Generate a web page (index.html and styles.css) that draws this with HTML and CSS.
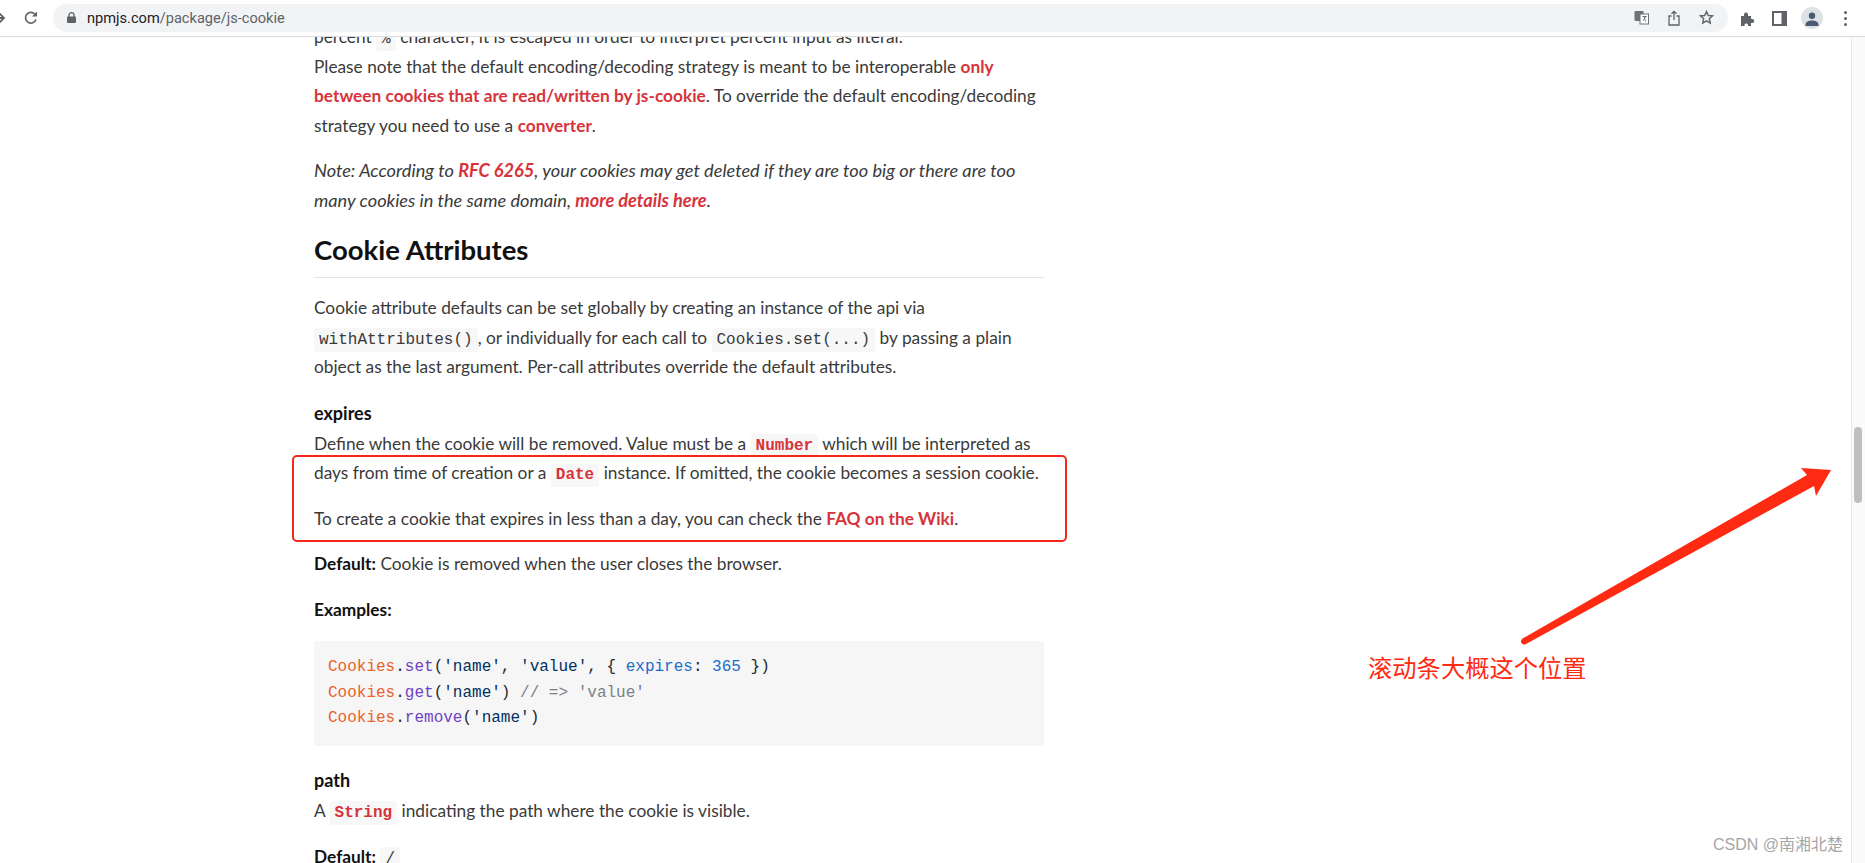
FILE: index.html
```html
<!DOCTYPE html>
<html lang="en">
<head>
    <meta charset="UTF-8">
    <title>js-cookie - npm</title>
    <link rel="stylesheet" href="styles.css">
</head>
<body>
    <header class="toolbar">
        <svg class="nav-icon forward" width="16" height="16" viewBox="0 0 16 16"><path d="M1 8h12M8 3l5 5-5 5" fill="none" stroke="#5f6368" stroke-width="1.8"/></svg>
        <svg class="nav-icon reload" width="16" height="16" viewBox="0 0 16 16"><path d="M13 9.5A5.4 5.4 0 1 1 11.8 4" fill="none" stroke="#5f6368" stroke-width="1.7"/><path d="M14 1.5v5h-5z" fill="#5f6368"/></svg>
        <div class="omnibox">
            <svg width="9" height="11" viewBox="0 0 9 11"><path d="M2 5V3.2a2.5 2.5 0 0 1 5 0V5" fill="none" stroke="#5f6368" stroke-width="1.3"/><rect y="4.5" width="9" height="6.5" rx="1" fill="#5f6368"/></svg>
            <span class="url">npmjs.com<span class="url-path">/package/js-cookie</span></span>
            <div class="omni-actions">
                <svg width="15" height="15" viewBox="0 0 15 15"><rect x="0.5" y="1" width="9" height="10" rx="1" fill="#6f7276"/><rect x="6" y="4" width="8.5" height="10" fill="#fff" stroke="#6f7276"/><path d="M8.5 6.5h4M10 6.5l1.5 5M12 6.5l-3 4" fill="none" stroke="#6f7276"/></svg>
                <svg width="12" height="16" viewBox="0 0 12 16"><path d="M3.5 6H1v9h10V6H8.500M6 10V1.500M3.500 3.800L6 1.300l2.500 2.500" fill="none" stroke="#5f6368" stroke-width="1.300"/></svg>
                <svg width="15" height="15" viewBox="0 0 15 15"><path d="M7.500 1.500l1.800 4 4.300.4-3.300 2.900 1 4.300-3.800-2.300-3.800 2.300 1-4.300L1.400 5.900l4.300-.4z" fill="none" stroke="#5f6368" stroke-width="1.400"/></svg>
            </div>
        </div>
        <svg class="puzzle" width="15" height="15" viewBox="0 0 15 15"><path d="M1 5h3V3.500a2 2 0 0 1 4 0V5h3v3h1.200a2 2 0 0 1 0 4H11v3H8v-1.200a1.800 1.800 0 0 0-3.500 0V15H1z" fill="#5f6368"/></svg>
        <svg class="sidebar" width="15" height="15" viewBox="0 0 15 15"><rect x="1" y="1" width="13" height="13" fill="#fff" stroke="#5f6368" stroke-width="2"/><rect x="9.500" y="1" width="4.500" height="13" fill="#5f6368"/></svg>
        <div class="avatar"><svg width="14" height="14" viewBox="0 0 14 14"><circle cx="7" cy="3.800" r="3.200" fill="#4a5a72"/><path d="M0.500 14v-1.500C0.500 10 4 8.600 7 8.600s6.500 1.400 6.500 3.900V14z" fill="#4a5a72"/></svg></div>
        <div class="menu-dots"><i></i><i></i><i></i></div>
    </header>

    <div class="page">
        <main class="viewport">
            <article class="readme">
                <p>percent <code>%</code> character, it is escaped in order to interpret percent input as literal.<br>
                Please note that the default encoding/decoding strategy is meant to be interoperable <a href="#">only between cookies that are read/written by js-cookie</a>. To override the default encoding/decoding strategy you need to use a <a href="#">converter</a>.</p>
                <p><em>Note: According to <a href="#">RFC 6265</a>, your cookies may get deleted if they are too big or there are too many cookies in the same domain, <a href="#">more details here</a>.</em></p>
                <h2>Cookie Attributes</h2>
                <p>Cookie attribute defaults can be set globally by creating an instance of the api via <code>withAttributes()</code>, or individually for each call to <code>Cookies.set(...)</code> by passing a plain object as the last argument. Per-call attributes override the default attributes.</p>
                <h3>expires</h3>
                <p>Define when the cookie will be removed. Value must be a <code class="type">Number</code> which will be interpreted as days from time of creation or a <code class="type">Date</code> instance. If omitted, the cookie becomes a session cookie.</p>
                <p>To create a cookie that expires in less than a day, you can check the <a href="#">FAQ on the Wiki</a>.</p>
                <p><strong>Default:</strong> Cookie is removed when the user closes the browser.</p>
                <p><strong>Examples:</strong></p>
                <pre class="snippet"><span class="obj">Cookies</span>.<span class="fn">set</span>(<span class="str">'name'</span>, <span class="str">'value'</span>, { <span class="num">expires</span>: <span class="num">365</span> })
<span class="obj">Cookies</span>.<span class="fn">get</span>(<span class="str">'name'</span>) <span class="cmt">// =&gt; 'value'</span>
<span class="obj">Cookies</span>.<span class="fn">remove</span>(<span class="str">'name'</span>)</pre>
                <h3>path</h3>
                <p>A <code class="type">String</code> indicating the path where the cookie is visible.</p>
                <p><strong>Default:</strong> <code>/</code></p>
            </article>
        </main>
        <aside class="scrollbar"><div class="scroll-thumb"></div></aside>
    </div>

    <div class="mark-box"></div>
    <svg class="mark-arrow" width="325" height="190" viewBox="0 0 325 190"><path d="M292 15L286 8 316 10 301 36 299 26 11 184Q8.500 185.500 6.500 183 5 181 7.500 178.500z" fill="#ff2a12"/></svg>
    <div class="mark-note">滚动条大概这个位置</div>
    <div class="watermark">CSDN @南湘北楚</div>
</body>
</html>
```

FILE: styles.css
```css
*{
    box-sizing: border-box;
}
html,
body{
    margin: 0;
    height: 863px;
    overflow: hidden;
    background-color: #ffffff;
}
body{
    font-family: "Lato", "Noto Sans CJK SC", sans-serif;
    color: #3a3a3a;
}

/* browser bar */
.toolbar{
    position: relative;
    z-index: 2;
    height: 37px;
    display: flex;
    align-items: center;
    background-color: #ffffff;
    border-bottom: 1px solid #dcdcdc;
}
.nav-icon{
    flex: none;
}
.forward{
    margin-left: -9px;
}
.reload{
    margin-left: 16px;
}
.omnibox{
    width: 1675px;
    height: 28px;
    margin-left: 14px;
    margin-top: -1px;
    padding: 0 14px;
    display: flex;
    align-items: center;
    background-color: #f1f3f4;
    border-radius: 14px;
}
.url{
    margin-left: 11px;
    font-family: "Roboto", sans-serif;
    font-size: 14.6px;
    color: #202124;
}
.url-path{
    color: #5f6368;
}
.omni-actions{
    margin-left: auto;
    display: flex;
    align-items: center;
    gap: 19px;
}
.puzzle{
    margin-left: 12px;
}
.sidebar{
    margin-left: 17px;
}
.avatar{
    width: 22px;
    height: 22px;
    margin-left: 14px;
    display: flex;
    align-items: flex-end;
    justify-content: center;
    padding-bottom: 3px;
    background-color: #dee1e6;
    border-radius: 50%;
}
.menu-dots{
    margin-left: 21px;
    display: grid;
    gap: 3px;
}
.menu-dots i{
    display: block;
    width: 3px;
    height: 3px;
    background-color: #5f6368;
    border-radius: 50%;
}

/* page */
.page{
    display: flex;
    height: 826px;
}
.viewport{
    flex: 1;
    overflow: hidden;
}
.readme{
    width: 730px;
    margin-left: 314px;
    margin-top: -15px;
    font-size: 17.3px;
    line-height: 29.5px;
}
.readme p{
    margin: 0 0 16px;
}
.readme em{
    font-size: 18.2px;
}
.readme a{
    color: #d6343b;
    font-weight: 700;
    text-decoration: none;
}
.readme strong{
    color: #111111;
    font-weight: 700;
}
.readme h2{
    margin: 16px 0 15px;
    padding-bottom: 8px;
    border-bottom: 1px solid #e4e4e4;
    font-size: 27.5px;
    line-height: 38px;
    font-weight: 700;
    color: #111111;
}
.readme h3{
    margin: 17px 0 2px;
    font-size: 18px;
    line-height: 28px;
    font-weight: 700;
    color: #111111;
}
code{
    padding: 3px 5px;
    font-family: "Liberation Mono", monospace;
    font-size: 16px;
    line-height: 1;
    background-color: #f7f7f7;
    border-radius: 3px;
}
code.type{
    color: #d6343b;
    font-weight: 700;
}
.snippet{
    height: 105px;
    margin: 17px 0 20px;
    padding: 14px 14px;
    font-family: "Liberation Mono", monospace;
    font-size: 16px;
    line-height: 25.500px;
    color: #24292e;
    background-color: #f6f6f6;
    border-radius: 3px;
}
.obj{
    color: #e8622a;
}
.fn{
    color: #6f42c1;
}
.str{
    color: #032f62;
}
.num{
    color: #1c6cc8;
}
.cmt{
    color: #7a8088;
}

/* scrollbar */
.scrollbar{
    position: relative;
    flex: none;
    width: 14px;
    background-color: #fafafa;
    border-left: 1px solid #e8e8e8;
}
.scroll-thumb{
    position: absolute;
    left: 2px;
    top: 390px;
    width: 8px;
    height: 76px;
    background-color: #bfbfbf;
    border-radius: 4px;
}

/* annotations drawn on top of the screenshot */
.mark-box{
    position: absolute;
    left: 292px;
    top: 455px;
    width: 775px;
    height: 87px;
    border: 2px solid #f5261b;
    border-radius: 5px;
}
.mark-arrow{
    position: absolute;
    left: 1515px;
    top: 460px;
}
.mark-note{
    position: absolute;
    left: 1368px;
    top: 649px;
    font-family: "Noto Sans CJK SC", sans-serif;
    font-size: 24.3px;
    line-height: 36px;
    color: #ff2a12;
}
.watermark{
    position: absolute;
    left: 1713px;
    top: 834px;
    font-family: "Liberation Sans", "Noto Sans CJK SC", sans-serif;
    font-size: 16px;
    line-height: 22px;
    color: #a6a6a6;
}
```
